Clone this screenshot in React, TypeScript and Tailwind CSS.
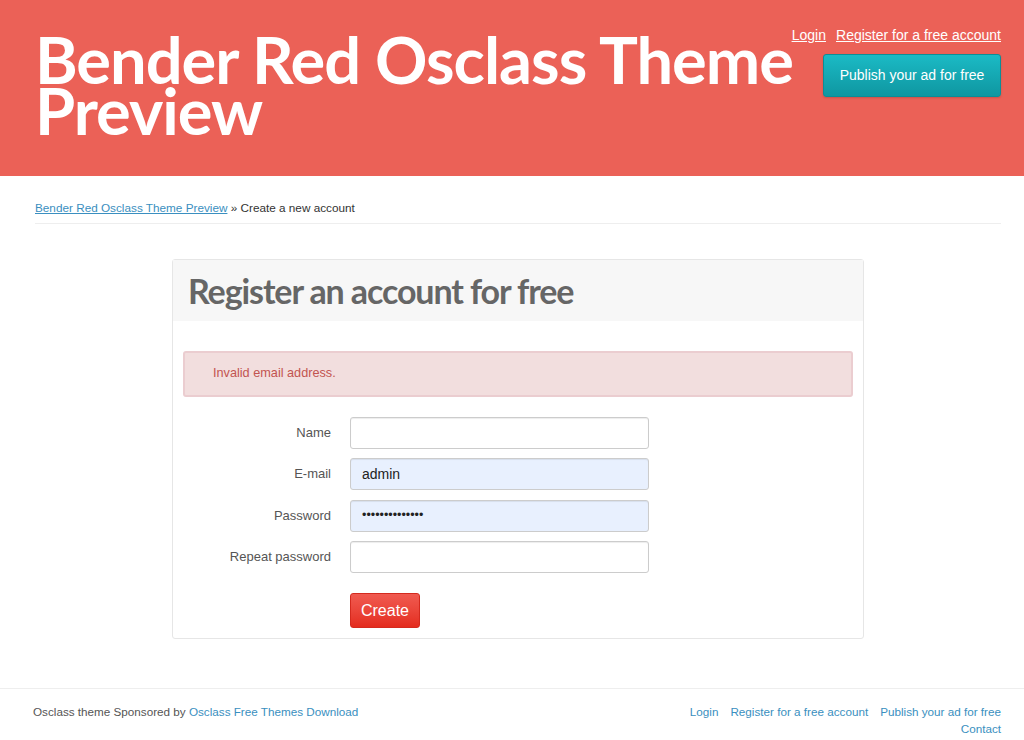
import React from "react";

const arial = { fontFamily: '"Liberation Sans", Arial, sans-serif' };
const lato = { fontFamily: 'Lato, "Liberation Sans", sans-serif' };

function Row({ label, value, filled, password }: { label: string; value?: string; filled?: boolean; password?: boolean }) {
  return (
    <div className="flex items-center h-[32px]">
      <div className="w-[148px] text-right text-[13px] text-[#555]">{label}</div>
      <div className="ml-[19px]">
        <div
          className={`w-[299px] h-[32px] rounded-[3px] border border-[#cccccc] shadow-[inset_0_1px_1px_rgba(0,0,0,0.075)] flex items-center px-[11px] text-[14px] text-[#222] ${filled ? "bg-[#e8f0fe]" : "bg-white"}`}
        >
          {password ? <span className="text-[12.5px] text-[#222]">••••••••••••••</span> : value}
        </div>
      </div>
    </div>
  );
}

export default function App() {
  return (
    <div className="min-h-[740px] bg-white" style={arial}>
      <header className="bg-[#eb6157] h-[176px] flex justify-between pl-[35px] pr-[23px]">
        <h1 className="flex-1 min-w-0 text-white font-bold text-[65px] leading-[51px] tracking-[-1px] pt-[34px] whitespace-nowrap" style={lato}>
          Bender Red Osclass Theme
          <br />
          Preview
        </h1>
        <div className="shrink-0 flex flex-col items-end pt-[25px]">
          <div className="flex gap-[10px] text-[14px] text-white underline whitespace-nowrap">
            <a>Login</a>
            <a>Register for a free account</a>
          </div>
          <div className="mt-[8px] w-[178px] h-[43px] rounded-[3px] border border-[#0d8d96] bg-gradient-to-b from-[#1bbac5] to-[#0f97a1] flex items-center justify-center text-white text-[14px] whitespace-nowrap shadow-[0_1px_2px_rgba(0,0,0,0.15)]">
            Publish your ad for free
          </div>
        </div>
      </header>

      <div className="pl-[35px] pr-[23px]">
        <div className="pt-[23px] pb-[6px] border-b border-[#eeeeee] text-[11.75px] text-[#333]">
          <a className="text-[#3a8fc0] underline">Bender Red Osclass Theme Preview</a> » Create a new account
        </div>

        <div className="flex justify-center pt-[35px]">
          <div className="w-[692px] border border-[#e6e6e6] rounded-[3px]">
            <div className="bg-[#f7f7f7] h-[61px] flex items-center px-[15px]">
              <h2 className="text-[34px] font-bold text-[#666] tracking-[-1.1px] whitespace-nowrap" style={lato}>
                Register an account for free
              </h2>
            </div>
            <div className="px-[10px] pt-[30px] pb-[10px]">
              <div className="h-[46px] rounded-[3px] border-2 border-[#ebcdd0] bg-[#f2dede] flex items-center pl-[28px] text-[12.7px] text-[#c25450]">
                Invalid email address.
              </div>
              <div className="pt-[20px] flex flex-col gap-[9.5px]">
                <Row label="Name" />
                <Row label="E-mail" value="admin" filled />
                <Row label="Password" filled password />
                <Row label="Repeat password" />
              </div>
              <div className="ml-[167px] mt-[20px] w-[70px] h-[35px] rounded-[3px] border border-[#d42a1e] bg-gradient-to-b from-[#f05a50] to-[#e42b1d] flex items-center justify-center text-white text-[16px]">
                Create
              </div>
            </div>
          </div>
        </div>
      </div>

      <footer className="mt-[49px] border-t border-[#eeeeee] pl-[33px] pr-[23px] pt-[14px] flex justify-between text-[11.7px] text-[#555]">
        <div>
          Osclass theme Sponsored by <a className="text-[#3a8fc0]">Osclass Free Themes Download</a>
        </div>
        <div className="flex flex-col items-end text-[#3a8fc0] leading-[17px]">
          <div className="flex gap-[12px]">
            <a>Login</a>
            <a>Register for a free account</a>
            <a>Publish your ad for free</a>
          </div>
          <a>Contact</a>
        </div>
      </footer>
    </div>
  );
}
